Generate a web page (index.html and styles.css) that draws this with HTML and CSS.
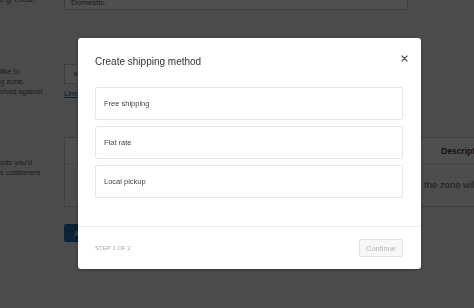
FILE: index.html
```html
<!doctype html>
<html>
<head>
  <meta charset="utf8">
  <title> Shipping zone </title>
  <link rel="stylesheet" href="styles.css">
</head>
<body>
  <div class="page">
    <div class="row row-name">
      <div class="desc">e.g. Local.</div>
      <div class="field">
        <div class="input">Domestic.</div>
      </div>
    </div>
    <div class="row row-regions">
      <div class="desc">like to<br>g zone.<br>ched against</div>
      <div class="field">
        <div class="select"><span class="token">×</span> United States (US)</div>
        <a class="link">Limit to specific ZIP/postcodes</a>
      </div>
    </div>
    <div class="row row-methods">
      <div class="desc">ods you'd<br>s customers</div>
      <div class="field">
        <div class="methods">
          <div class="methods-head">
            <span></span>
            <span>Title</span>
            <span>Enabled</span>
            <span>Description</span>
          </div>
          <div class="methods-empty">the zone will see them.</div>
        </div>
        <button class="add">Add shipping method</button>
      </div>
    </div>
  </div>

  <!-- modal -->
  <div class="backdrop"></div>
  <div class="modal">
    <div class="modal-head">
      <h1 class="modal-title">Create shipping method</h1>
      <button class="modal-close" aria-label="Close">
        <svg width="7" height="7" viewBox="0 0 7 7"><path d="M1 1 L6 6 M6 1 L1 6" stroke="#5a5a5a" stroke-width="1.2" stroke-linecap="round"/></svg>
      </button>
    </div>
    <div class="modal-body">
      <div class="option">Free shipping</div>
      <div class="option">Flat rate</div>
      <div class="option">Local pickup</div>
    </div>
    <div class="modal-foot">
      <span class="step">STEP 1 OF 2</span>
      <button class="continue" disabled>Continue</button>
    </div>
  </div>
</body>
</html>
```

FILE: styles.css
```css
html, body {
  width: 100%;
  height: 100%;
  overflow: hidden;
  margin: 0px;
  padding: 0px;
  background: #f1f1f1;
  font-family: 'Liberation Sans', Arial, sans-serif;
  color: #5a6065;
}

.page {
  margin-top: -10px;
  width: 700px;
}
.row {
  display: grid;
  grid-template-columns: 64px 1fr;
}
.desc {
  font-size: 7.5px;
  line-height: 10px;
  white-space: nowrap;
}
.row-name .desc { padding-top: 5px; }
.row-regions { margin-top: 54px; }
.row-regions .desc { padding-top: 3px; }
.row-methods { margin-top: 38px; }
.row-methods .desc { padding-top: 21px; }

.input, .select {
  box-sizing: border-box;
  width: 344px;
  height: 20px;
  border: 1px solid #c8c8c8;
  background: #fff;
  font-size: 8px;
  line-height: 24px;
  padding: 0 6px;
}
.select {
  line-height: 18px;
  padding: 0 8px;
}
.token { font-size: 9px; }
.link {
  display: block;
  margin-top: 5px;
  font-size: 7.5px;
  line-height: 10px;
  color: #2271b1;
  text-decoration: underline;
}

.methods {
  width: 600px;
  border: 1px solid #cfcfcf;
  background: #fff;
}
.methods-head {
  display: grid;
  grid-template-columns: 24px 140px 204px 1fr;
  height: 25px;
  align-items: center;
  border-bottom: 1px solid #dcdcdc;
  font-size: 8.5px;
  font-weight: bold;
  color: #3a3f44;
}
.methods-head span { padding-left: 8px; }
.methods-empty {
  height: 42px;
  line-height: 42px;
  padding-left: 359px;
  font-size: 9.5px;
  background: #f9f9f9;
}
.add {
  display: block;
  margin-top: 17px;
  height: 18px;
  border: 0;
  border-radius: 2px;
  padding: 0 10px;
  background: #2271b1;
  color: #fff;
  font-family: inherit;
  font-size: 8px;
}

.backdrop {
  position: fixed;
  left: 0;
  top: 0;
  right: 0;
  bottom: 0;
  background: rgba(0, 0, 0, 0.69);
}
.modal {
  position: fixed;
  left: 78px;
  top: 38px;
  width: 343px;
  background: #fff;
  border-radius: 3px;
  box-shadow: 0 1px 4px rgba(0, 0, 0, 0.3);
  color: #3c3c3c;
}
.modal-head {
  display: flex;
  justify-content: space-between;
  padding: 18px 12px 0 17px;
}
.modal-title {
  margin: 0;
  font-size: 10px;
  line-height: 12px;
  font-weight: normal;
  color: #333;
}
.modal-close {
  border: 0;
  background: none;
  padding: 0;
  width: 9px;
  height: 9px;
  margin-top: -2px;
  display: flex;
  align-items: center;
  justify-content: center;
}
.modal-body {
  display: flex;
  flex-direction: column;
  gap: 6px;
  padding: 19px 18px 28px 17px;
  border-bottom: 1px solid #ededed;
}
.option {
  box-sizing: border-box;
  height: 33px;
  border: 1px solid #e6e6e6;
  border-radius: 2px;
  padding: 0 8px;
  display: flex;
  align-items: center;
  font-size: 7.5px;
  color: #444;
}
.modal-foot {
  height: 42px;
  display: flex;
  align-items: center;
  justify-content: space-between;
  padding: 0 18px 0 17px;
}
.step {
  font-size: 6px;
  color: #aaa;
}
.continue {
  width: 44px;
  height: 18px;
  padding: 0;
  border: 1px solid #e2e2e2;
  border-radius: 2px;
  background: #f7f7f7;
  color: #b4b4b4;
  font-family: inherit;
  font-size: 7.5px;
}
```
